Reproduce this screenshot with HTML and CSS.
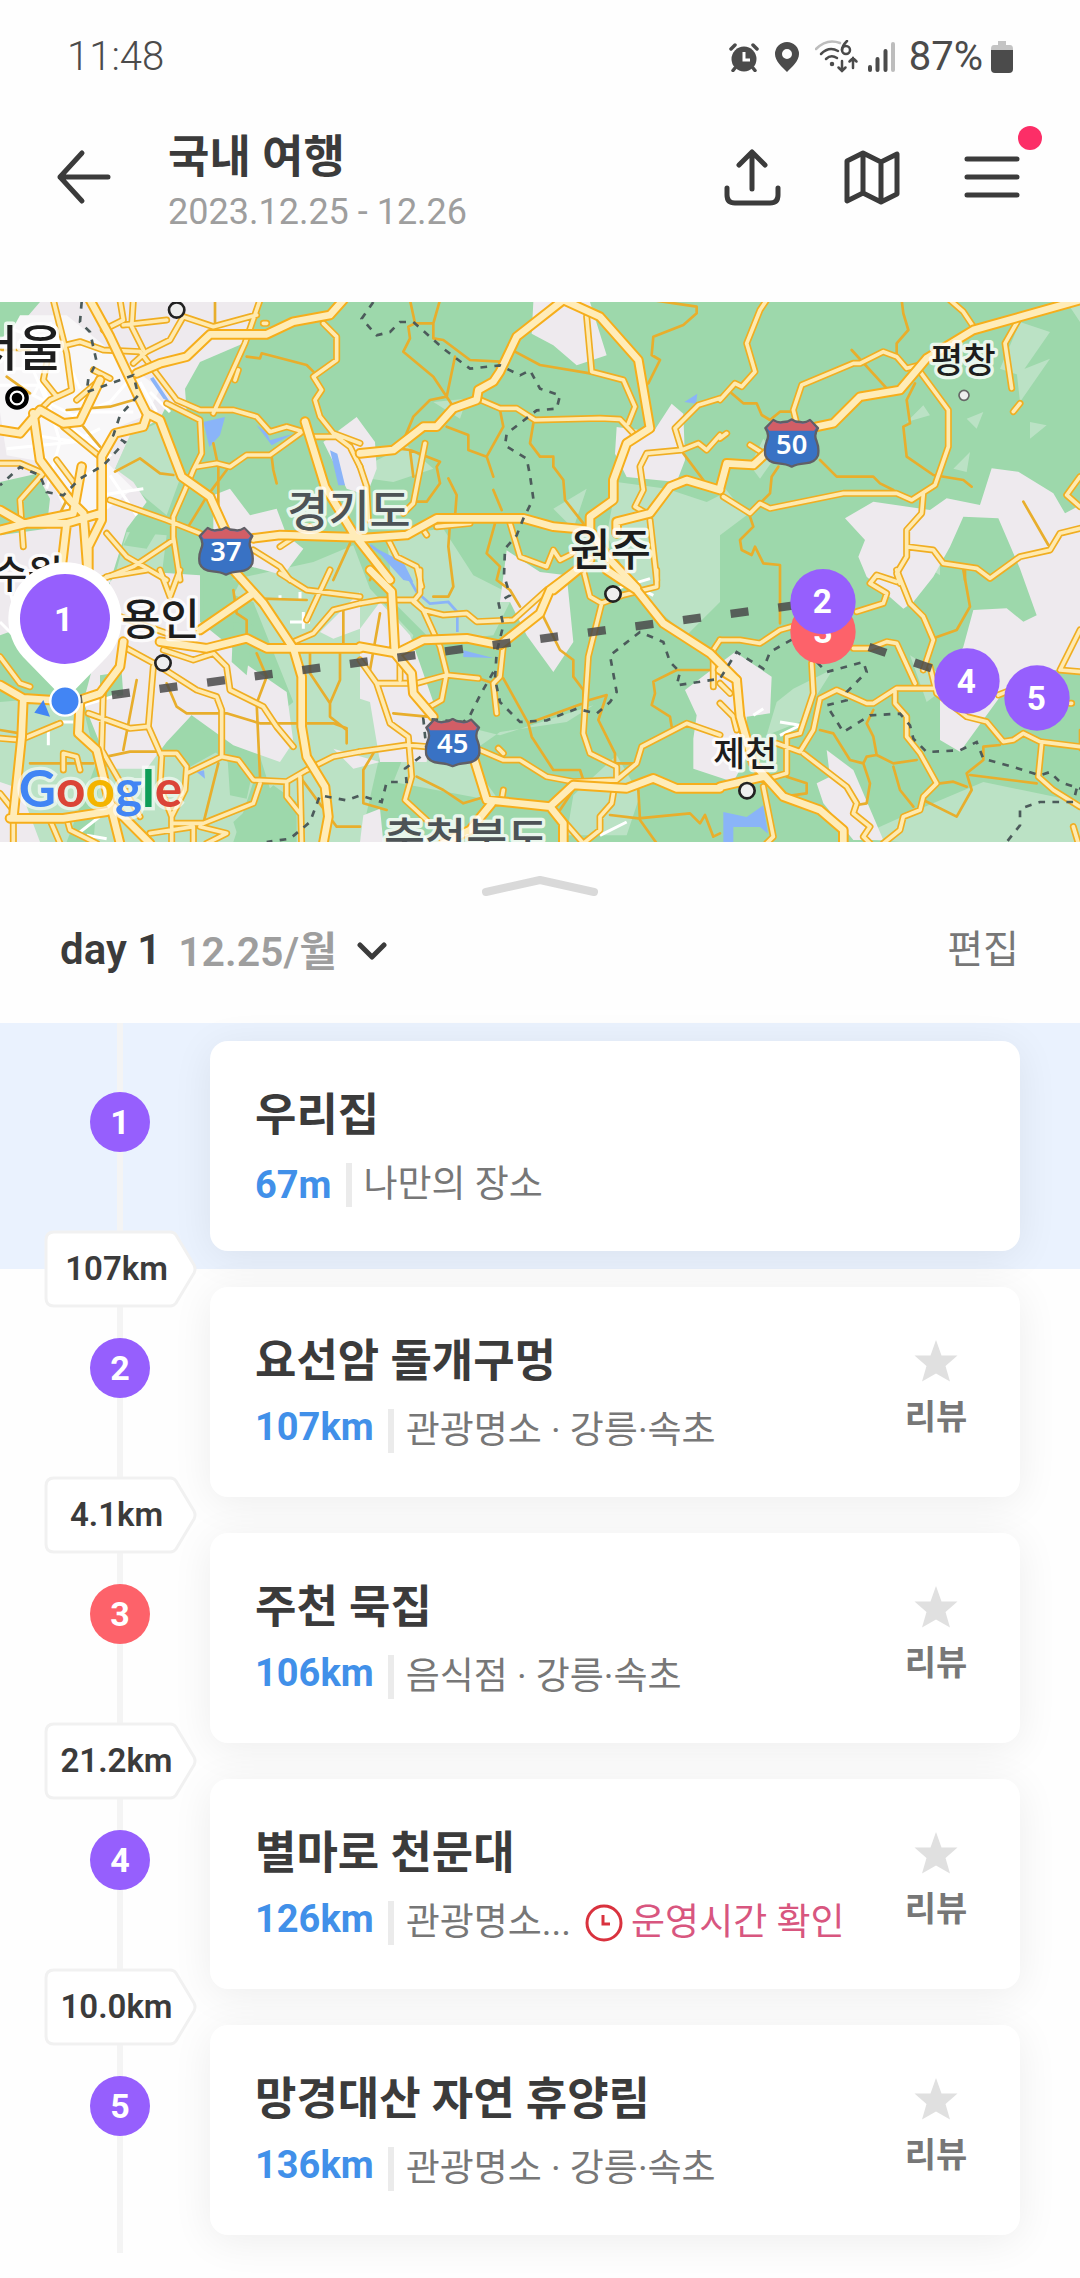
FILE: index.html
```
<!DOCTYPE html>
<html lang="ko">
<head>
    <meta charset="UTF-8">
    <meta name="viewport" content="width=device-width, initial-scale=1.0">
    <title>국내 여행</title>
    <link rel="stylesheet" href="styles.css">
</head>
<body>

    <!-- shared shapes -->
    <svg class="sprite" aria-hidden="true">
        <symbol id="star" viewBox="0 0 46 44">
            <path d="M23 1L28.500 16.500H44.500L32.500 27L37 42.500L23 34.500L9 42.500L13.500 27L1.500 16.500H17.500Z"/>
        </symbol>
        <symbol id="tag" viewBox="0 0 153 78">
            <path d="M10 2H126Q130 2 132 5L150 35Q152 39 150 43L132 73Q130 76 126 76H10Q2 76 2 68V10Q2 2 10 2Z"/>
        </symbol>
        <symbol id="shield" viewBox="0 0 170 150">
            <path d="M30 6Q45 16 60 12Q75 12 85 4Q95 12 110 12Q125 16 140 6L164 30Q150 50 160 70Q168 90 164 112Q156 134 125 136Q100 138 85 146Q70 138 45 136Q14 134 6 112Q2 90 10 70Q20 50 6 30Z" fill="#3972c4" stroke="#605f66" stroke-width="7" stroke-linejoin="round"/>
            <path d="M30 10Q45 20 60 16Q75 16 85 8Q95 16 110 16Q125 20 140 10L158 30L152 38H18L12 30Z" fill="#d25e66"/>
        </symbol>
    </svg>

    <div class="status-bar">
        <span class="status-time">11:48</span>
        <div class="status-icons">
            <svg width="30" height="30" viewBox="0 0 30 30">
                <circle cx="15" cy="17" r="12.500" fill="#4b4b4b"/>
                <path d="M2 7L6 3M28 7L24 3M6 26L4 28.500M24 26L26 28.500" stroke="#4b4b4b" stroke-width="3.500" stroke-linecap="round"/>
                <path d="M15 10V18H21" fill="none" stroke="#fff" stroke-width="3"/>
            </svg>
            <svg class="icon-pin" width="24" height="30" viewBox="0 0 24 30">
                <path d="M12 0A12 12 0 0 1 24 12C24 19 17 25 12 30C7 25 0 19 0 12A12 12 0 0 1 12 0ZM12 7A5 5 0 1 0 12 17A5 5 0 1 0 12 7Z" fill="#4b4b4b" fill-rule="evenodd"/>
            </svg>
            <svg class="icon-wifi" width="44" height="34" viewBox="0 0 44 34" fill="none" stroke="#4b4b4b" stroke-width="2.500" stroke-linecap="round">
                <path d="M1 9Q12 -2 25 3" stroke="#bdbdbd"/>
                <path d="M6 14Q14 6 23 11M11 19Q16 14 22 18"/>
                <circle cx="17" cy="24" r="1" fill="#4b4b4b"/>
                <path d="M32 1Q27 6 27 10"/>
                <circle cx="31" cy="10" r="4"/>
                <path d="M27 21V31M23.500 27.500L27 31L30.500 27.500M38 28V18M34.500 21.500L38 18L41.500 21.500"/>
            </svg>
            <svg class="icon-signal" width="28" height="30" viewBox="0 0 28 30" stroke-width="4" stroke-linecap="round">
                <path d="M3 25V28M10.500 17V28M18.500 9V28" stroke="#4b4b4b"/>
                <path d="M26 2V28" stroke="#bdbdbd"/>
            </svg>
            <span class="battery-level">87%</span>
            <svg class="icon-battery" width="22" height="32" viewBox="0 0 22 32">
                <path d="M7 0H15V4H19Q22 4 22 8V12H0V8Q0 4 3 4H7Z" fill="#c4c4c4"/>
                <path d="M0 9H22V28Q22 32 18 32H4Q0 32 0 28Z" fill="#4b4b4b"/>
            </svg>
        </div>
    </div>

    <header class="trip-header">
        <button class="icon-button" aria-label="뒤로">
            <svg viewBox="0 0 60 60"><path d="M28 6L6 30L28 54M6 30H54"/></svg>
        </button>
        <div class="trip-info">
            <h1>국내 여행</h1>
            <p>2023.12.25 - 12.26</p>
        </div>
        <nav class="actions">
            <button class="icon-button" aria-label="공유">
                <svg viewBox="0 0 60 60"><path d="M30 42V5M17 18L30 5L43 18M5 41V48Q5 56 13 56H48Q56 56 56 48V41"/></svg>
            </button>
            <button class="icon-button" aria-label="지도">
                <svg viewBox="0 0 60 60"><path d="M5 14L21 6L39 15L55 7V47L39 55L21 46L5 54ZM21 6V46M39 15V55"/></svg>
            </button>
            <button class="icon-button" aria-label="메뉴">
                <svg viewBox="0 0 60 60"><path d="M5 12H55M5 30H55M5 48H55"/></svg>
                <span class="new-dot"></span>
            </button>
        </nav>
    </header>

    <div class="map">
        <svg viewBox="0 0 3240 1620" role="img" aria-label="여행 지도">
            <defs>
                <g id="trunk-roads">
                    <g transform="translate(0 -6)">
                        <path d="M270 0L330 110L420 300L440 340L480 360L545 530L630 590L680 700M410 220L480 190L560 170L630 103H800L880 65L990 45L1030 0M915 365L975 560L1060 700L1170 840M0 390L60 400L120 330L190 370L240 365L300 240M100 340L120 480L210 600L250 640L265 840M440 350L430 380L345 400L305 470V660L265 740V840M0 630L70 670H200L300 640M0 690L120 660L220 640L245 500M200 670L180 840M760 715L840 705L1080 712"/>
                    </g>
                    <g transform="translate(1080 -6)">
                        <path d="M0 715L140 705L230 655H490L580 680L690 690V650L760 600V540L800 430L870 385L835 180L720 50L610 0M690 690L750 780L830 864M770 700V665L870 640L930 560L980 540L1080 570M610 0L470 110L420 215L400 245L355 270L350 300L280 325L230 380L190 380L100 450L0 460M690 780L580 870"/>
                    </g>
                    <g transform="translate(2160 -6)">
                        <path d="M0 565L20 490L100 495L160 440M290 380L340 370L420 290L540 270L620 175L760 90L1080 0"/>
                    </g>
                    <g transform="translate(0 804)">
                        <path d="M700 0L790 100L880 235L905 320V470L920 560L975 650L985 740L970 820M480 215L620 235L740 205L800 235H1080M370 215L360 290L300 370L240 390L235 490L290 540L330 700L450 820M0 345L70 385L65 500L40 740M70 385L150 390M30 745H190L320 725M600 180L760 70M330 700L360 820"/>
                    </g>
                    <g transform="translate(1080 804)">
                        <path d="M30 0L95 65L105 250L155 310L160 370L220 440M340 560L380 690L570 710L640 645L800 655L880 625L950 655H1080M0 230L110 250L190 210L320 205L420 225L540 130L570 60L650 0M740 0L830 60L910 160L1050 250L1130 330M570 710L610 760V820M395 700L330 780L250 820"/>
                    </g>
                    <g transform="translate(2160 804)">
                        <path d="M0 300L50 330L60 440L100 580L190 680L300 720L370 780V820M0 650L130 620"/>
                    </g>
                </g>
                <g id="main-roads">
                    <g transform="translate(0 -6)">
                        <path d="M160 0L200 160L215 270L150 300L120 330M400 190L440 155L510 120L550 50L640 80L770 45M780 0L735 130L640 340M360 0L370 60L310 90M400 0L395 80L430 150M500 60L370 75M200 135L240 125L310 150L420 155L530 300L600 330L700 330L770 350L810 395L860 380L910 395M500 310L600 360L605 460L580 510L555 570L520 650V720L400 800L300 840M590 500L650 490L690 500L740 465H810L900 400M970 70L1010 110V180L940 230L965 270L945 300L960 350L1000 400L1080 430M940 410H1010L1050 440L1080 500M190 380L300 470M0 490H60L130 520M140 190L130 240L170 290M280 210L330 235M330 600L500 660L600 700M320 700L380 770L500 840M760 750L840 800L870 840M840 740L930 680M520 710L540 840M130 520L60 600L70 740M170 480L230 560M800 70H790M715 210L705 240M300 240L230 300M265 300L240 370"/>
                    </g>
                    <g transform="translate(1080 -6)">
                        <path d="M350 295L420 325H470L525 360L720 355L780 358L820 400M680 50L695 215L790 240L825 320L805 370M195 430L160 610L130 640M1080 295L1015 315L945 385L965 450L860 460L840 500L850 570L825 620L860 640M965 450L1015 430L1040 450L1080 405M450 670L480 770L560 800L580 750L600 780L640 760M0 500L20 560L25 660M80 710L110 770L170 800L185 860M870 660L890 840M230 680L330 670M190 690L200 705"/>
                    </g>
                    <g transform="translate(2160 -6)">
                        <path d="M140 0L120 30L80 130L105 215L65 260L45 250L0 300M230 370L220 330L245 255L400 190H420L490 155L530 170L560 205L600 195M600 215L685 330V440L645 555L575 600L530 580H370L150 625L120 610L90 640L10 590M690 0L730 35L760 80M895 60L855 130L875 265M880 335L900 310M610 580L605 640L560 690V770L530 820L540 850M560 740L640 750L670 790L770 805L810 835L900 770L990 750L1020 700L1080 685M1080 530L1040 585L1080 620M90 435L130 460M0 415L20 400"/>
                    </g>
                    <g transform="translate(0 804)">
                        <path d="M460 290L445 470L485 560L480 650L515 740V820M490 240L580 270L640 250L680 290L690 360L790 410L830 470L880 530M370 230L480 290L590 360L650 380L665 420V560L560 610M480 550H530L560 590L555 660L515 740M665 560L715 570L760 630L860 635L920 600L1000 560L1080 545M860 640V680L900 730M515 760H610L760 700L780 640M310 360L305 540L420 740M265 430L390 475L440 470M900 620L905 820M480 0L510 80L540 0M840 10L920 60L1080 80M1080 100L1000 120L940 190L870 220M990 0L920 150M0 505L60 510L180 460M190 600V550L230 560L240 600M200 745L210 780L290 820M150 750L180 820M0 670L40 720V820M600 770L680 790L620 820M0 260L60 340L90 350M450 790L580 770V820M320 20L440 0M360 140L500 190"/>
                    </g>
                    <g transform="translate(1080 804)">
                        <path d="M180 0V70L160 95L190 120L240 230L260 310L245 390L210 410M0 100L60 90H160L190 120L250 135L320 130L350 155L460 150L560 60M430 225L420 320L400 340L410 430M50 340H170L260 315L355 325M0 270L50 340L90 460L145 500L155 620L135 690L200 750M0 545L140 525L200 530M360 540L430 570H480L560 620L640 635L770 630V590L690 550L670 490L685 260L725 100L790 75L890 50V0M670 0L690 80L725 100M770 630L830 580L845 530L980 460L1080 495M760 670L755 700L720 740V780L670 820L600 740M430 660L425 690M415 535L430 550M120 330V250M1080 210L1060 240V350"/>
                    </g>
                    <g transform="translate(2160 804)">
                        <path d="M0 210H60L120 220L180 180L215 170M275 280L280 370L240 490L200 500V610L130 630M170 520L240 545L280 480L300 385L350 360L440 400H460L530 355H650M410 125L490 100L500 70L450 40L470 15L530 35M400 235H450L500 215L530 220L585 340M530 0L570 100L610 140L640 210L610 300M630 290L650 370L740 440L800 455L850 515L880 510L910 490L960 515L1080 530M525 360V400L560 440V500L600 550L650 640L610 680L600 720L550 740L540 780L490 820M250 550L380 650L410 700L400 730L450 770L430 800L450 820M965 520L955 620L1000 660L1080 710M835 375L860 365M1080 180L1020 300L1080 305M130 650L160 800L140 820M1060 770L1075 820M1050 400H1055M0 400L40 440L50 480M0 340L30 370"/>
                    </g>
                </g>
            </defs>

            <rect width="3240" height="1620" fill="#9dd8ab"/>

            <!-- land -->
            <g class="wood-light">
                <path d="M390 400L480 360L540 530L500 640L440 590L345 500ZM380 690L500 700L480 860L340 840ZM940 780L1060 730L1110 860L1240 1000L1180 1180L1080 1620H860L760 1300L880 1200L760 900L620 850ZM420 1370L620 1330L760 1440L700 1620H280L300 1400ZM0 1200L240 1180L290 1380L200 1620H0Z"/>
                <path d="M1300 300L1400 290L1380 350ZM1120 480L1220 430L1300 500L1180 540L1110 530ZM1160 700L1330 680L1420 820L1540 880L1480 1000L1300 1020L1180 900ZM1660 620L1760 560L1720 680ZM1850 540L2000 560L2120 600L2160 580V900L2060 1000L1900 860L1820 700Z"/>
                <path d="M1260 1240L1500 1300L1780 1210L1700 1260L1500 1290L1400 1360L1500 1500L1180 1440ZM1720 1480L1850 1360L1920 1480L1880 1600H1700ZM2160 540L2240 640L2160 700ZM2250 490L2290 410L2330 460L2280 530ZM2380 1160L2500 1100L2400 1260L2300 1300L2330 1200ZM2560 1610L2760 1520L2950 1440L3240 1500V1620H2700Z"/>
                <path d="M2730 1060L2860 1140L2780 1200ZM3060 60L3150 90L3060 220L3000 200ZM3050 210L3150 170L3060 300ZM2720 360L2770 310L2790 340ZM2900 350L2950 330L2930 380ZM3090 360L3140 370L3090 410ZM2860 500L2910 450L2900 510ZM3200 0H3240V60ZM2820 760L2790 800L2820 820Z"/>
            </g>
            <g class="urban">
                <path d="M60 0H780L740 120L600 180L555 260L560 330L500 310L480 350L390 400L345 500L400 540L440 600L380 680L330 840V900L250 1200L330 1400H440L500 1320L575 1240L700 1330L840 1380L880 1320L860 1170L700 1060V1040L600 960V820L360 804L280 900L0 1000V60Z"/>
                <path d="M690 560L750 640L830 620L860 700L910 740L850 820L740 790L640 700V580ZM1070 345L970 420L1040 560L1100 580L1130 500L1125 420ZM960 990L1080 870L1080 980L1000 1010Z"/>
                <path d="M1600 0H1770L1820 160L1730 190L1660 130L1595 95ZM2015 305L2050 335L2055 475L2030 540L1880 525L1845 455L1850 375L1960 390ZM1520 745L1620 810L1700 820L1720 1020L1660 1110L1580 1000L1530 900L1500 900Z"/>
                <path d="M1080 980L1140 900L1230 1000L1300 1200L1280 1380H1140L1110 1200L1080 1190ZM1000 1340L1140 1380L1060 1400ZM2055 1164L2205 1050L2315 1124L2310 1234L2240 1244V1364L2200 1440L2080 1400L2080 1310L2090 1240Z"/>
                <path d="M2535 649L2620 599L2790 624L2840 589L2940 609L2975 499L3055 509L3160 574L3195 634L3240 610V1104L3110 1104L3000 1184L2880 1349L2820 1314V1180L2890 1034L2920 924L3020 919L3070 959L3110 940L3060 800L2995 649L2890 644L2850 734L2800 824L2740 900L2710 920L2600 824L2575 764L2595 714Z"/>
                <path d="M2480 1344L2560 1404L2650 1614H2560L2470 1504L2450 1444L2490 1424ZM0 1440L60 1460L120 1620H0ZM1090 1540L1140 1520L1150 1620H1080Z"/>
            </g>
            <g class="wood">
                <path d="M0 0H120L60 70L0 110ZM0 540L110 515L150 590L140 680L0 700ZM610 800L720 840L690 900L610 960ZM700 960L760 970L740 1120L695 1080ZM390 690L470 690L440 740L370 730ZM300 1120L365 1110L370 1180L300 1190ZM500 1330L575 1240L650 1350L560 1400ZM680 1330L760 1400L740 1490L690 1480ZM700 1560L820 1450L890 1500V1620H720Z"/>
            </g>
            <path class="downtown" d="M60 40H200L400 200L480 260L440 340L340 380L310 470L400 560L300 640H200L130 480L20 460L0 330V150Z"/>
            <g class="water">
                <path d="M610 360L675 345L660 400L628 435ZM800 390L810 415L880 395L815 430L770 370ZM990 445L1012 455L1035 550L1015 550ZM460 225L510 300L490 290L450 230ZM390 215L420 195L425 205L400 225ZM1110 720L1130 740L1210 780L1240 840L1210 834L1170 790ZM2053 300L2092 275L2088 305ZM2170 1530L2240 1545L2290 1510L2304 1595L2280 1575H2200V1620H2170ZM1390 1045L1480 1068L1390 1065ZM590 1410L612 1405L615 1430Z"/>
                <path class="river" d="M1110 730L1210 800L1250 870L1290 905L1345 900L1372 930V990"/>
            </g>
            <path class="street" d="M30 80L180 130L100 280L220 340L330 300L390 230M20 200H180M60 110L140 300M0 250H130L180 420M20 440L220 420L300 380M150 60L240 260M220 380L330 460L240 540M100 400L300 430M180 420L140 560M260 330L400 330M330 520L410 640M300 580L430 560M420 240L470 330M450 270L510 330M20 830L80 1060M0 960L120 1080M250 1210L350 1180M170 1260H220M145 1280V1330M240 1590L330 1520M260 1600L320 1610M870 960H930M910 930V980M840 880V890M900 870V890M1860 830L1960 880M1850 860L1950 830M2340 1260L2400 1270L2340 1300M2260 1240L2290 1220M1800 1600L1880 1560"/>

            <!-- roads -->
            <g class="road-local">
                <path transform="translate(0 -6)" d="M740 170L780 175L785 160L920 195L940 215M645 0V80M345 515L420 475L480 520L520 525M640 430L655 500V620M815 470L820 510L830 550M565 680L620 590L680 510M0 150H90M20 230L90 280M200 330L330 320L400 300M250 380L300 440M210 580L180 640M1000 840L1050 730"/>
                <path transform="translate(1080 -6)" d="M150 0L165 70L145 80L150 115L130 155L220 230L260 290L280 320M240 0L220 70V115L250 120L330 180L420 185L460 155M165 70H220M285 170L260 290L210 300L160 350L135 410M465 155L540 195L690 220M875 0L1010 20V40L970 75L880 110L875 165L900 180L865 250M260 380L325 405V450L380 470L430 380L420 330M380 470L400 530M520 370L510 430L540 470H580V500L610 540L615 600L670 670M150 450L160 530M110 445L150 450L240 485L230 500L240 550L200 605H170M265 535L290 585L285 650M400 570L425 630M270 670L265 740L280 860L265 890H220M405 670L380 760L420 800L410 840L450 870L480 920M970 460L1030 540M0 730L60 780L30 840"/>
                <path transform="translate(2160 -6)" d="M545 0L550 40L565 90L530 130V170M395 150L500 265M585 250L560 300L570 370L550 380L560 470L640 525L730 540L755 560M35 280L70 310H110L125 345L150 360L180 335H210M300 480L350 530H460L480 550L520 570M175 500L155 530L150 580L120 610M90 650L100 680L60 720L65 750L95 765L105 740L130 790L180 795V970M910 605L985 735M735 810V840"/>
                <path transform="translate(0 804)" d="M760 85L920 90M700 60L710 130L740 150V200M410 330L370 540M500 340L530 410L560 430H680L780 460H1000L1040 475M770 250L800 320L770 400L780 620M930 250V310L990 400V440L1040 480V520M1020 240V330L990 400M655 580L610 760M320 560L390 545H480M900 620L1010 770H1080M0 480L60 490M90 580H280M1030 120V230"/>
                <path transform="translate(1080 804)" d="M550 140L600 240L640 270V320L670 360V400L505 460L430 325M505 460L515 500L580 600H660L670 630M670 395L740 375L715 450L765 550V580H820M1080 300H950L880 335L885 370L875 405L930 440L935 470M170 620L250 660L310 700L360 685M750 735L835 745L990 730L1020 760L1035 735L1060 800L1080 790M835 660L840 750L890 820M40 550L10 600V700L80 720M60 130L30 300M355 325L400 340M640 660L600 720M100 430L200 440"/>
                <path transform="translate(2160 804)" d="M730 0L750 110L710 180L640 205M300 480L340 490L390 570L430 580L440 560L470 555L460 500L440 460L460 420M470 555L520 580L590 570M520 590L540 660L580 710M430 580L450 640L440 700L410 705M610 690L710 740L755 660L740 610L790 570V530L840 525M750 615L950 640M660 640L700 635L740 650M200 620L260 640V670L190 680M1080 480V540"/>
            </g>
            <use class="road-main-casing" href="#main-roads"/>
            <use class="road-main" href="#main-roads"/>
            <use class="road-trunk-casing" href="#trunk-roads"/>
            <use class="road-trunk" href="#trunk-roads"/>

            <path class="border-line" d="M245 0L240 60L270 90L290 180L265 230L260 270L400 220L415 280L360 340L340 400L375 420L310 490L240 530L190 580L140 570L120 520L60 495L0 550M1120 0L1085 50L1130 100L1170 90L1200 60L1240 60L1330 140L1410 200L1500 190L1560 220L1590 205L1620 260L1680 280L1670 320L1610 325L1520 395L1515 430L1580 470L1590 520L1600 590L1570 650L1550 700L1515 740L1512 820L1530 880L1495 900L1510 970L1490 1050L1485 1130L1500 1200L1560 1260L1640 1255L1730 1220L1790 1235L1830 1200L1850 1170L1830 1060L1920 990L1990 1020L2010 1080L2040 1110L2030 1150L2160 1130L2210 1050L2290 1100L2310 1050L2380 1010L2480 1110L2590 1080L2600 1110L2540 1170L2540 1195L2480 1210L2530 1290L2610 1240L2700 1235L2730 1270L2740 1310L2780 1350L2880 1345L2930 1320L2950 1370L3040 1395L3120 1420L3150 1410L3180 1440L3240 1460M3230 1460L3220 1500L3120 1500L3060 1520L3060 1570L3020 1620M1480 1110L1440 1180L1410 1240L1390 1260L1270 1250L1280 1350L1215 1400L1220 1440L1160 1440L1145 1500L1080 1480L1040 1495L960 1480L930 1560L870 1610L800 1620"/>

            <g class="route">
                <path d="M193 1198L2469 899"/>
                <path d="M2607 1035L2905 1137"/>
            </g>

            <!-- road shields -->
            <use href="#shield" x="593" y="672" width="170" height="150"/>
            <use href="#shield" x="2290" y="348" width="170" height="150"/>
            <use href="#shield" x="1273" y="1247" width="170" height="150"/>
            <g class="shield-number">
                <text x="678" y="778">37</text>
                <text x="2375" y="457">50</text>
                <text x="1358" y="1354">45</text>
            </g>

            <!-- towns -->
            <g class="town-dot">
                <circle cx="530" cy="24" r="23"/>
                <circle cx="489" cy="1083" r="23"/>
                <circle cx="1839" cy="876" r="23"/>
                <circle cx="2241" cy="1466" r="23"/>
                <circle class="small" cx="2892" cy="280" r="15"/>
            </g>
            <circle cx="51" cy="288" r="29" fill="#fff" stroke="#000" stroke-width="13"/>
            <circle cx="51" cy="288" r="16"/>
            <g class="town">
                <text x="-80" y="191" font-size="146">서울</text>
                <text x="-24" y="859" font-size="116">수원</text>
                <text x="364" y="1000" font-size="128">용인</text>
                <text x="1710" y="792" font-size="132">원주</text>
                <text x="2792" y="212" font-size="106">평창</text>
                <text x="2140" y="1393" font-size="104">제천</text>
                <text class="province" x="862" y="674" font-size="134">경기도</text>
                <text class="province" x="1152" y="1658" font-size="134">충청북도</text>
            </g>

            <text class="google" x="56" y="1516"><tspan fill="#4285f4">G</tspan><tspan fill="#db4437">o</tspan><tspan fill="#f4b400">o</tspan><tspan fill="#4285f4">g</tspan><tspan fill="#0f9d58">l</tspan><tspan fill="#db4437">e</tspan></text>

            <!-- stops -->
            <path d="M103 1232L130 1194L150 1244Z" fill="#4285f4"/>
            <path d="M195 1194L70 1066A170 170 0 1 1 320 1066Z" fill="#fff"/>
            <circle class="stop" cx="195" cy="951" r="135"/>
            <circle cx="195" cy="1197" r="44" fill="#4285f4" stroke="#fff" stroke-width="7"/>
            <circle class="stop food" cx="2469" cy="989" r="98"/>
            <text class="stop-number" x="2469" y="1024">3</text>
            <circle class="stop" cx="2469" cy="899" r="98"/>
            <circle class="stop" cx="2901" cy="1137" r="98"/>
            <circle class="stop" cx="3111" cy="1188" r="98"/>
            <g class="stop-number">
                <text x="191" y="986">1</text>
                <text x="2467" y="934">2</text>
                <text x="2899" y="1172">4</text>
                <text x="3109" y="1223">5</text>
            </g>
        </svg>
    </div>

    <section class="sheet">
        <svg class="handle" viewBox="0 0 120 24"><path d="M6 18L60 6L114 18"/></svg>
        <div class="day-row">
            <button class="day-select">
                <strong>day 1</strong>
                <span>12.25/월</span>
                <svg class="chevron" viewBox="0 0 30 20"><path d="M3 3L15 15L27 3"/></svg>
            </button>
            <button class="edit">편집</button>
        </div>
    </section>

    <ol class="places">
        <li class="place selected">
            <div class="rail"><span class="number">1</span></div>
            <article class="card">
                <div class="details">
                    <h2>우리집</h2>
                    <div class="meta">
                        <span class="distance">67m</span>
                        <span class="category">나만의 장소</span>
                    </div>
                </div>
            </article>
            <div class="leg"><svg><use href="#tag"/></svg><span>107km</span></div>
        </li>
        <li class="place">
            <div class="rail"><span class="number">2</span></div>
            <article class="card">
                <div class="details">
                    <h2>요선암 돌개구멍</h2>
                    <div class="meta">
                        <span class="distance">107km</span>
                        <span class="category">관광명소 · 강릉·속초</span>
                    </div>
                </div>
                <button class="review"><svg><use href="#star"/></svg>리뷰</button>
            </article>
            <div class="leg"><svg><use href="#tag"/></svg><span>4.1km</span></div>
        </li>
        <li class="place">
            <div class="rail"><span class="number food">3</span></div>
            <article class="card">
                <div class="details">
                    <h2>주천 묵집</h2>
                    <div class="meta">
                        <span class="distance">106km</span>
                        <span class="category">음식점 · 강릉·속초</span>
                    </div>
                </div>
                <button class="review"><svg><use href="#star"/></svg>리뷰</button>
            </article>
            <div class="leg"><svg><use href="#tag"/></svg><span>21.2km</span></div>
        </li>
        <li class="place">
            <div class="rail"><span class="number">4</span></div>
            <article class="card">
                <div class="details">
                    <h2>별마로 천문대</h2>
                    <div class="meta">
                        <span class="distance">126km</span>
                        <span class="category">관광명소...</span>
                        <span class="hours">
                            <svg viewBox="0 0 38 38"><circle cx="19" cy="19" r="17"/><path d="M18 11V20H25"/></svg>
                            운영시간 확인
                        </span>
                    </div>
                </div>
                <button class="review"><svg><use href="#star"/></svg>리뷰</button>
            </article>
            <div class="leg"><svg><use href="#tag"/></svg><span>10.0km</span></div>
        </li>
        <li class="place">
            <div class="rail"><span class="number">5</span></div>
            <article class="card">
                <div class="details">
                    <h2>망경대산 자연 휴양림</h2>
                    <div class="meta">
                        <span class="distance">136km</span>
                        <span class="category">관광명소 · 강릉·속초</span>
                    </div>
                </div>
                <button class="review"><svg><use href="#star"/></svg>리뷰</button>
            </article>
        </li>
    </ol>

</body>
</html>
```
FILE: styles.css
```
* {
    box-sizing: border-box;
}
body {
    margin: 0;
    background: #fefefe;
    color: #3b3b3b;
    font-family: Roboto, "Noto Sans CJK KR", sans-serif;
    min-height: 100vh;
}
h1, h2, p {
    margin: 0;
}
button {
    padding: 0;
    border: none;
    background: none;
    color: inherit;
    font-family: inherit;
    cursor: pointer;
}
.sprite {
    position: absolute;
    width: 0;
    height: 0;
}

/* status bar */
.status-bar {
    display: flex;
    justify-content: space-between;
    padding: 33px 67px 0;
    color: #4b4b4b;
    font-size: 40px;
    font-weight: 300;
    line-height: 48px;
}
.status-icons {
    display: flex;
    align-items: center;
}
.icon-pin {
    margin-left: 16px;
}
.icon-wifi {
    margin-left: 16px;
}
.icon-signal {
    margin-left: 8px;
}
.battery-level {
    margin-left: 14px;
    font-weight: 400;
}
.icon-battery {
    margin-left: 8px;
}

/* header */
.trip-header {
    display: flex;
    align-items: center;
    gap: 54px;
    padding: 39px 58px 68px 54px;
}
.icon-button {
    position: relative;
    width: 60px;
    height: 60px;
}
.icon-button svg {
    display: block;
    fill: none;
    stroke: #3b3b3b;
    stroke-width: 5;
    stroke-linecap: round;
    stroke-linejoin: round;
}
.trip-info {
    flex: 1;
    padding-top: 10px;
}
.trip-info h1 {
    font-size: 45px;
    line-height: 56px;
}
.trip-info p {
    margin-top: 4px;
    color: #9e9e9e;
    font-size: 36px;
    line-height: 44px;
}
.actions {
    display: flex;
    gap: 60px;
}
.new-dot {
    position: absolute;
    top: -21px;
    right: -20px;
    width: 24px;
    height: 24px;
    border-radius: 50%;
    background: #fc2e67;
}

/* map */
.map svg {
    display: block;
    width: 100%;
}
.wood-light {
    fill: #bbe2c5;
}
.wood {
    fill: #9dd8ab;
}
.urban {
    fill: #eeeaee;
}
.downtown {
    fill: #f8f7f8;
}
.water {
    fill: #8ab4f8;
}
.river {
    fill: none;
    stroke: #8ab4f8;
    stroke-width: 8;
}
.street {
    fill: none;
    stroke: #fff;
    stroke-width: 9;
}
.road-local, .road-main, .road-main-casing, .road-trunk, .road-trunk-casing {
    fill: none;
    stroke-linecap: round;
    stroke-linejoin: round;
}
.road-local {
    stroke: #e8ae2c;
    stroke-width: 8;
}
.road-main-casing {
    stroke: #f0ae22;
    stroke-width: 21;
}
.road-main {
    stroke: #ffeab0;
    stroke-width: 11;
}
.road-trunk-casing {
    stroke: #f6ae1b;
    stroke-width: 32;
}
.road-trunk {
    stroke: #ffecb8;
    stroke-width: 20;
}
.border-line {
    fill: none;
    stroke: #4c5b5b;
    stroke-width: 8;
    stroke-dasharray: 20 22;
}
.route {
    fill: none;
    stroke: #4a4a4a;
    stroke-width: 25;
    stroke-dasharray: 54 90;
    opacity: 0.85;
}
.shield-number {
    fill: #fff;
    font-family: "Noto Sans", sans-serif;
    font-size: 82px;
    font-weight: 600;
    text-anchor: middle;
}
.town-dot {
    fill: #eeeeee;
    stroke: #222;
    stroke-width: 8;
}
.town-dot .small {
    stroke: #666;
    stroke-width: 5;
}
.town {
    fill: #1d1d1d;
    stroke: rgba(255, 255, 255, 0.8);
    stroke-width: 20;
    stroke-linejoin: round;
    paint-order: stroke;
    font-family: "Noto Sans CJK KR", sans-serif;
    font-weight: 500;
}
.town .province {
    fill: #4d5356;
}
.google {
    stroke: rgba(255, 255, 255, 0.6);
    stroke-width: 20;
    paint-order: stroke;
    font-family: Lato, sans-serif;
    font-size: 154px;
    font-weight: 700;
}
.stop {
    fill: #965ffd;
}
.stop.food {
    fill: #fd626a;
}
.stop-number {
    fill: #fff;
    font-size: 100px;
    font-weight: 700;
    text-anchor: middle;
}

/* day selector */
.sheet {
    padding: 32px 61px 44px 60px;
}
.handle {
    display: block;
    width: 120px;
    height: 24px;
    margin: 0 auto 22px;
    fill: none;
    stroke: #d9d9d9;
    stroke-width: 8;
    stroke-linecap: round;
    stroke-linejoin: round;
}
.day-row {
    display: flex;
    align-items: center;
    justify-content: space-between;
}
.day-select {
    display: flex;
    align-items: center;
    font-size: 42px;
    line-height: 54px;
}
.day-select strong {
    font-weight: 600;
}
.day-select span {
    margin: 5px 20px 0 17px;
    color: #9e9e9e;
    font-size: 41px;
    font-weight: 600;
}
.chevron {
    width: 30px;
    height: 20px;
    margin-top: 4px;
    fill: none;
    stroke: #3b3b3b;
    stroke-width: 5;
    stroke-linecap: round;
    stroke-linejoin: round;
}
.edit {
    color: #777;
    font-size: 39px;
    line-height: 54px;
}

/* places */
.places {
    margin: 0;
    padding: 0 0 24px;
    list-style: none;
}
.place {
    position: relative;
    display: flex;
    padding-right: 60px;
}
.place.selected {
    background: #eaf2fe;
}
.rail {
    width: 210px;
    padding: 69px 0 0 90px;
    background: linear-gradient(#f4f4f4, #f4f4f4) 117px 0 / 6px 100% no-repeat;
}
.number {
    display: block;
    width: 60px;
    border-radius: 50%;
    background: #965ffd;
    color: #fff;
    font-size: 34px;
    font-weight: 700;
    line-height: 60px;
    text-align: center;
}
.number.food {
    background: #fd626a;
}
.card {
    flex: 1;
    display: flex;
    justify-content: space-between;
    min-height: 210px;
    margin: 18px 0;
    padding: 48px 39px 0 45px;
    border-radius: 18px;
    background: #fff;
    box-shadow: 0 6px 42px rgba(0, 0, 0, 0.07);
}
.card h2 {
    font-size: 45px;
    line-height: 54px;
}
.meta {
    display: flex;
    align-items: flex-start;
    margin-top: 20px;
    font-size: 37px;
    line-height: 44px;
}
.distance {
    color: #4190e9;
    font-size: 38px;
    font-weight: 700;
    line-height: 36px;
}
.selected .distance {
    line-height: 44px;
}
.category {
    margin-left: 14px;
    padding-left: 12px;
    border-left: 6px solid #ebebeb;
    color: #777;
}
.hours {
    display: flex;
    align-items: center;
    margin-left: 14px;
    color: #d8567f;
}
.hours svg {
    width: 38px;
    height: 38px;
    margin-right: 8px;
    fill: none;
    stroke: #d9323e;
    stroke-width: 3;
}
.review {
    align-self: flex-start;
    width: 90px;
    padding-top: 4px;
    color: #777;
    font-size: 34px;
    font-weight: 700;
    line-height: 48px;
}
.review svg {
    display: block;
    width: 46px;
    height: 44px;
    margin: 0 auto 10px;
    fill: #e0e0e0;
}

/* distance to the next stop */
.leg {
    position: absolute;
    left: 44px;
    bottom: -39px;
    z-index: 1;
    width: 153px;
    padding-right: 8px;
    font-size: 33px;
    font-weight: 600;
    line-height: 78px;
    text-align: center;
}
.leg svg {
    position: absolute;
    top: 0;
    left: 0;
    width: 153px;
    height: 78px;
    fill: #fff;
    stroke: #f1f1f1;
    stroke-width: 3;
}
.leg span {
    position: relative;
}
```
